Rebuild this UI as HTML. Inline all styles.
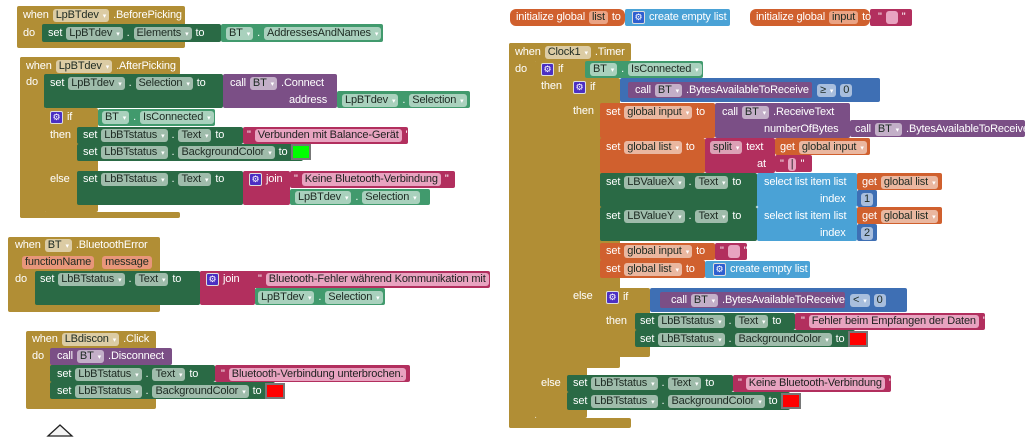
<!DOCTYPE html>
<html><head><meta charset="utf-8"><style>
body{margin:0;width:1035px;height:436px;background:#fff;position:relative;overflow:hidden;font-family:"Liberation Sans",Arial,sans-serif;font-size:11px;color:#fff}
.x{position:absolute;border-radius:2px}
.t{position:absolute;display:flex;align-items:center;gap:4px;height:16px;white-space:nowrap;letter-spacing:-0.15px}
.c{background:rgba(255,255,255,.55);color:#1d2a22;border-radius:3px;padding:0 3px;height:13px;line-height:13px;display:inline-block}
.c.d::after{content:"▾";font-size:7px;color:#fff;margin-left:4px}
.s{background:#e8a3c0;color:#222;border-radius:3px;padding:0 3px;height:13px;line-height:13px}
.g{width:11px;height:11px;background:#4b2fc3;border:1px solid #ddd;border-radius:2px;font-size:9px;line-height:11px;text-align:center;color:#fff}
.col{width:16px;height:12px;border:2px solid #777;}
.G{background:#b18e35}.D{background:#2a6a45}.T{background:#419a6d}.P{background:#7b4f86}.K{background:#b22f5e}.O{background:#d0602e}.L{background:#4aa2d6}.M{background:#3e6fb4}
</style></head><body>

<div class="x G" style="left:17px;top:6px;width:168px;height:42px"></div>
<div class="x D" style="left:42px;top:24px;width:179px;height:18px"></div>
<div class="x T" style="left:221px;top:24px;width:162px;height:18px"></div>
<div class="t" style="left:23px;top:7px">when <span class="c d">LpBTdev</span> .BeforePicking</div>
<div class="t" style="left:23px;top:25px">do</div>
<div class="t" style="left:48px;top:25px">set <span class="c d">LpBTdev</span> . <span class="c d">Elements</span> to</div>
<div class="t" style="left:226px;top:25px"><span class="c d">BT</span> . <span class="c d">AddressesAndNames</span></div>

<div class="x G" style="left:20px;top:57px;width:160px;height:18px"></div>
<div class="x G" style="left:20px;top:57px;width:25px;height:161px"></div>
<div class="x G" style="left:20px;top:212px;width:160px;height:6px"></div>
<div class="x D" style="left:44px;top:74px;width:179px;height:34px"></div>
<div class="x P" style="left:223px;top:74px;width:114px;height:34px"></div>
<div class="x T" style="left:337px;top:91px;width:133px;height:17px"></div>
<div class="x G" style="left:44px;top:108px;width:54px;height:104px"></div>
<div class="x T" style="left:98px;top:109px;width:117px;height:17px"></div>
<div class="x D" style="left:77px;top:127px;width:166px;height:17px"></div>
<div class="x K" style="left:243px;top:127px;width:165px;height:17px"></div>
<div class="x D" style="left:77px;top:144px;width:226px;height:17px"></div>
<div class="x D" style="left:77px;top:171px;width:166px;height:34px"></div>
<div class="x K" style="left:243px;top:171px;width:47px;height:34px"></div>
<div class="x K" style="left:290px;top:171px;width:165px;height:17px"></div>
<div class="x T" style="left:290px;top:189px;width:140px;height:16px"></div>
<div class="t" style="left:26px;top:58px">when <span class="c d">LpBTdev</span> .AfterPicking</div>
<div class="t" style="left:26px;top:74px">do</div>
<div class="t" style="left:50px;top:75px">set <span class="c d">LpBTdev</span> . <span class="c d">Selection</span> to</div>
<div class="t" style="left:230px;top:75px">call <span class="c d">BT</span> .Connect</div>
<div class="t" style="left:289px;top:92px">address</div>
<div class="t" style="left:342px;top:92px"><span class="c d">LpBTdev</span> . <span class="c d">Selection</span></div>
<div class="t" style="left:50px;top:109px"><span class="g">⚙</span> if</div>
<div class="t" style="left:102px;top:109px"><span class="c d">BT</span> . <span class="c d">IsConnected</span></div>
<div class="t" style="left:50px;top:127px">then</div>
<div class="t" style="left:83px;top:127px">set <span class="c d">LbBTstatus</span> . <span class="c d">Text</span> to</div>
<div class="t" style="left:247px;top:127px">" <span class="s">Verbunden mit Balance-Gerät</span> "</div>
<div class="t" style="left:83px;top:144px">set <span class="c d">LbBTstatus</span> . <span class="c d">BackgroundColor</span> to <span class="col" style="background:#0f0"></span></div>
<div class="t" style="left:50px;top:171px">else</div>
<div class="t" style="left:83px;top:171px">set <span class="c d">LbBTstatus</span> . <span class="c d">Text</span> to</div>
<div class="t" style="left:249px;top:171px"><span class="g">⚙</span> join</div>
<div class="t" style="left:294px;top:171px">" <span class="s">Keine Bluetooth-Verbindung</span> "</div>
<div class="t" style="left:295px;top:189px"><span class="c d">LpBTdev</span> . <span class="c d">Selection</span></div>

<div class="x G" style="left:8px;top:237px;width:152px;height:75px"></div>
<div class="x D" style="left:35px;top:271px;width:165px;height:34px"></div>
<div class="x K" style="left:200px;top:271px;width:290px;height:17px"></div>
<div class="x K" style="left:200px;top:271px;width:55px;height:34px"></div>
<div class="x T" style="left:255px;top:288px;width:130px;height:17px"></div>
<div class="t" style="left:15px;top:237px">when <span class="c d">BT</span> .BluetoothError</div>
<div class="t" style="left:22px;top:254px"><span class="c" style="background:#e8967a">functionName</span><span class="c" style="background:#e8967a;margin-left:4px">message</span></div>
<div class="t" style="left:15px;top:271px">do</div>
<div class="t" style="left:40px;top:271px">set <span class="c d">LbBTstatus</span> . <span class="c d">Text</span> to</div>
<div class="t" style="left:206px;top:271px"><span class="g">⚙</span> join</div>
<div class="t" style="left:258px;top:271px">" <span class="s">Bluetooth-Fehler während Kommunikation mit</span> "</div>
<div class="t" style="left:258px;top:289px"><span class="c d">LpBTdev</span> . <span class="c d">Selection</span></div>

<div class="x G" style="left:26px;top:331px;width:130px;height:78px"></div>
<div class="x P" style="left:50px;top:348px;width:122px;height:17px"></div>
<div class="x D" style="left:50px;top:365px;width:165px;height:17px"></div>
<div class="x K" style="left:215px;top:365px;width:195px;height:17px"></div>
<div class="x D" style="left:50px;top:382px;width:225px;height:17px"></div>
<div class="t" style="left:32px;top:331px">when <span class="c d">LBdiscon</span> .Click</div>
<div class="t" style="left:32px;top:348px">do</div>
<div class="t" style="left:57px;top:348px">call <span class="c d">BT</span> .Disconnect</div>
<div class="t" style="left:57px;top:366px">set <span class="c d">LbBTstatus</span> . <span class="c d">Text</span> to</div>
<div class="t" style="left:221px;top:366px">" <span class="s">Bluetooth-Verbindung unterbrochen.</span> "</div>
<div class="t" style="left:57px;top:383px">set <span class="c d">LbBTstatus</span> . <span class="c d">BackgroundColor</span> to <span class="col" style="background:#f00"></span></div>

<svg style="position:absolute;left:46px;top:423px" width="28" height="14"><path d="M2 13 L14 2 L26 13 Z" fill="#f4f4f4" stroke="#222" stroke-width="1.3"/></svg>

<div class="x O" style="left:510px;top:9px;width:115px;height:17px;border-radius:6px"></div>
<div class="x L" style="left:625px;top:9px;width:105px;height:17px"></div>
<div class="t" style="left:516px;top:9px">initialize global <span class="c" style="background:#eaa384">list</span> to</div>
<div class="t" style="left:632px;top:9px"><span class="g" style="background:#2f5fd0">⚙</span> create empty list</div>
<div class="x O" style="left:750px;top:9px;width:120px;height:17px;border-radius:6px"></div>
<div class="x K" style="left:870px;top:9px;width:42px;height:17px"></div>
<div class="t" style="left:756px;top:9px">initialize global <span class="c" style="background:#eaa384">input</span> to</div>
<div class="t" style="left:878px;top:9px">" <span class="s" style="width:6px"></span> "</div>

<div class="x G" style="left:509px;top:43px;width:122px;height:18px"></div>
<div class="x G" style="left:509px;top:43px;width:26px;height:385px"></div>
<div class="x G" style="left:509px;top:418px;width:122px;height:10px"></div>
<div class="x G" style="left:535px;top:60px;width:52px;height:358px"></div>
<div class="x T" style="left:585px;top:61px;width:118px;height:17px"></div>
<div class="x G" style="left:567px;top:78px;width:53px;height:290px"></div>
<div class="x M" style="left:620px;top:78px;width:260px;height:24px"></div>
<div class="x P" style="left:628px;top:82px;width:184px;height:16px"></div>
<div class="t" style="left:515px;top:44px">when <span class="c d">Clock1</span> .Timer</div>
<div class="t" style="left:515px;top:61px">do</div>
<div class="t" style="left:541px;top:61px"><span class="g">⚙</span> if</div>
<div class="t" style="left:590px;top:61px"><span class="c d">BT</span> . <span class="c d">IsConnected</span></div>
<div class="t" style="left:541px;top:78px">then</div>
<div class="t" style="left:573px;top:79px"><span class="g">⚙</span> if</div>
<div class="t" style="left:635px;top:82px">call <span class="c d">BT</span> .BytesAvailableToReceive</div>
<div class="t" style="left:817px;top:82px"><span class="c d">≥</span> <span class="c">0</span></div>
<div class="t" style="left:573px;top:103px">then</div>

<div class="x O" style="left:600px;top:103px;width:115px;height:35px"></div>
<div class="x P" style="left:715px;top:103px;width:135px;height:35px"></div>
<div class="x P" style="left:850px;top:120px;width:175px;height:17px"></div>
<div class="t" style="left:606px;top:104px">set <span class="c d">global input</span> to</div>
<div class="t" style="left:722px;top:104px">call <span class="c d">BT</span> .ReceiveText</div>
<div class="t" style="left:764px;top:121px">numberOfBytes</div>
<div class="t" style="left:855px;top:121px">call <span class="c d">BT</span> .BytesAvailableToReceive</div>

<div class="x O" style="left:600px;top:138px;width:105px;height:35px"></div>
<div class="x K" style="left:705px;top:138px;width:70px;height:35px"></div>
<div class="x O" style="left:775px;top:138px;width:95px;height:17px"></div>
<div class="x K" style="left:775px;top:155px;width:37px;height:17px"></div>
<div class="t" style="left:606px;top:139px">set <span class="c d">global list</span> to</div>
<div class="t" style="left:710px;top:139px"><span class="c d">split</span> text</div>
<div class="t" style="left:757px;top:156px">at</div>
<div class="t" style="left:780px;top:139px">get <span class="c d">global input</span></div>
<div class="t" style="left:780px;top:156px">" <span class="s">|</span> "</div>

<div class="x D" style="left:600px;top:173px;width:157px;height:34px"></div>
<div class="x L" style="left:757px;top:173px;width:100px;height:34px"></div>
<div class="x O" style="left:857px;top:173px;width:85px;height:17px"></div>
<div class="x M" style="left:857px;top:190px;width:20px;height:17px"></div>
<div class="t" style="left:606px;top:174px">set <span class="c d">LBValueX</span> . <span class="c d">Text</span> to</div>
<div class="t" style="left:764px;top:174px">select list item list</div>
<div class="t" style="left:820px;top:191px">index</div>
<div class="t" style="left:862px;top:174px">get <span class="c d">global list</span></div>
<div class="t" style="left:861px;top:191px"><span class="c">1</span></div>

<div class="x D" style="left:600px;top:207px;width:157px;height:34px"></div>
<div class="x L" style="left:757px;top:207px;width:100px;height:34px"></div>
<div class="x O" style="left:857px;top:207px;width:85px;height:17px"></div>
<div class="x M" style="left:857px;top:224px;width:20px;height:17px"></div>
<div class="t" style="left:606px;top:208px">set <span class="c d">LBValueY</span> . <span class="c d">Text</span> to</div>
<div class="t" style="left:764px;top:208px">select list item list</div>
<div class="t" style="left:820px;top:225px">index</div>
<div class="t" style="left:862px;top:208px">get <span class="c d">global list</span></div>
<div class="t" style="left:861px;top:225px"><span class="c">2</span></div>

<div class="x O" style="left:600px;top:243px;width:115px;height:17px"></div>
<div class="x K" style="left:715px;top:243px;width:32px;height:17px"></div>
<div class="t" style="left:606px;top:243px">set <span class="c d">global input</span> to</div>
<div class="t" style="left:720px;top:243px">" <span class="s" style="width:6px"></span> "</div>
<div class="x O" style="left:600px;top:260px;width:105px;height:18px"></div>
<div class="x L" style="left:705px;top:261px;width:105px;height:17px"></div>
<div class="t" style="left:606px;top:261px">set <span class="c d">global list</span> to</div>
<div class="t" style="left:713px;top:261px"><span class="g" style="background:#2f5fd0">⚙</span> create empty list</div>

<div class="t" style="left:573px;top:288px">else</div>
<div class="x G" style="left:600px;top:288px;width:50px;height:69px"></div>
<div class="x M" style="left:650px;top:288px;width:257px;height:24px"></div>
<div class="x P" style="left:660px;top:292px;width:185px;height:16px"></div>
<div class="t" style="left:606px;top:289px"><span class="g">⚙</span> if</div>
<div class="t" style="left:671px;top:292px">call <span class="c d">BT</span> .BytesAvailableToReceive</div>
<div class="t" style="left:850px;top:292px"><span class="c d">&lt;</span> <span class="c">0</span></div>
<div class="t" style="left:606px;top:313px">then</div>
<div class="x D" style="left:635px;top:313px;width:160px;height:17px"></div>
<div class="x K" style="left:795px;top:313px;width:190px;height:17px"></div>
<div class="x D" style="left:635px;top:330px;width:220px;height:17px"></div>
<div class="t" style="left:640px;top:313px">set <span class="c d">LbBTstatus</span> . <span class="c d">Text</span> to</div>
<div class="t" style="left:801px;top:313px">" <span class="s">Fehler beim Empfangen der Daten</span> "</div>
<div class="t" style="left:640px;top:331px">set <span class="c d">LbBTstatus</span> . <span class="c d">BackgroundColor</span> to <span class="col" style="background:#f00"></span></div>

<div class="t" style="left:541px;top:375px">else</div>
<div class="x D" style="left:567px;top:375px;width:166px;height:17px"></div>
<div class="x K" style="left:733px;top:375px;width:158px;height:17px"></div>
<div class="x D" style="left:567px;top:392px;width:223px;height:18px"></div>
<div class="t" style="left:573px;top:375px">set <span class="c d">LbBTstatus</span> . <span class="c d">Text</span> to</div>
<div class="t" style="left:738px;top:375px">" <span class="s">Keine Bluetooth-Verbindung</span> "</div>
<div class="t" style="left:573px;top:393px">set <span class="c d">LbBTstatus</span> . <span class="c d">BackgroundColor</span> to <span class="col" style="background:#f00"></span></div>
</body></html>
